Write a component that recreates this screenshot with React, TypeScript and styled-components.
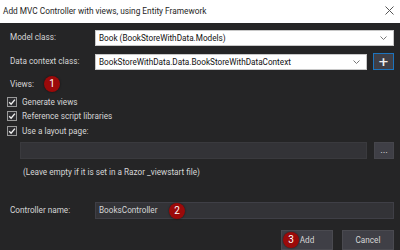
import React from "react";
import styled, { createGlobalStyle } from "styled-components";

const GlobalStyle = createGlobalStyle`
    html, body {
        margin: 0;
        padding: 0;
        background: #252526;
    }
    body {
        font-family: "Segoe UI", Roboto, Lato, sans-serif;
        font-size: 8.2px;
    }
`;

type BadgeProps = {
    $left?: number,
    $top?: number,
}

const App = () => {
    return (
        <>
            <GlobalStyle />
            <Window>
                <TitleBar>
                    <Title>Add MVC Controller with views, using Entity Framework</Title>
                    <CloseBtn aria-label="Close">
                        <svg width="9" height="9" viewBox="0 0 9 9">
                            <path d="M0.5 0.5 L8.5 8.5 M8.5 0.5 L0.5 8.5" stroke="#555" strokeWidth="1" />
                        </svg>
                    </CloseBtn>
                </TitleBar>

                <Body>
                    <FieldRow $top={7}>
                        <Label>Model class:</Label>
                        <Select>
                            <span>Book (BookStoreWithData.Models)</span>
                            <Chevron />
                        </Select>
                    </FieldRow>

                    <FieldRow $top={7}>
                        <Label>Data context class:</Label>
                        <Select>
                            <span>BookStoreWithData.Data.BookStoreWithDataContext</span>
                            <Chevron />
                        </Select>
                        <PlusBtn>+</PlusBtn>
                    </FieldRow>

                    <ViewsLabel>
                        Views:
                        <Badge $left={34} $top={-1}>1</Badge>
                    </ViewsLabel>

                    <CheckList>
                        <CheckRow><CheckBox /> Generate views</CheckRow>
                        <CheckRow><CheckBox /> Reference script libraries</CheckRow>
                        <CheckRow><CheckBox /> Use a layout page:</CheckRow>
                    </CheckList>

                    <PathRow>
                        <TextBox $dim />
                        <BrowseBtn>...</BrowseBtn>
                    </PathRow>

                    <Hint>(Leave empty if it is set in a Razor _viewstart file)</Hint>

                    <FieldRow $top={23}>
                        <Label>Controller name:</Label>
                        <TextBox>
                            BooksController
                            <Badge $left={73} $top={0}>2</Badge>
                        </TextBox>
                    </FieldRow>

                    <Footer>
                        <DialogBtn>
                            Add
                            <Badge $left={1} $top={1}>3</Badge>
                        </DialogBtn>
                        <DialogBtn>Cancel</DialogBtn>
                    </Footer>
                </Body>
            </Window>
        </>
    );
};

const Chevron = () => (
    <svg width="7" height="4" viewBox="0 0 7 4">
        <path d="M0.5 0.5 L3.5 3.5 L6.5 0.5" stroke="#777" strokeWidth="1" fill="none" />
    </svg>
);

const CheckBox = () => (
    <Box>
        <svg width="8" height="8" viewBox="0 0 8 8">
            <path d="M1.2 4.3 L3.1 6.2 L6.9 1.6" stroke="#f0f0f0" strokeWidth="1.4" fill="none" />
        </svg>
    </Box>
);

const Window = styled.div`
    width: 400px;
    height: 250px;
    display: flex;
    flex-direction: column;
    background: #252526;
    overflow: hidden;
`;

const TitleBar = styled.header`
    height: 23px;
    flex-shrink: 0;
    background: #ffffff;
    display: flex;
    align-items: center;
    justify-content: space-between;
    padding: 0 6px 0 3px;
    box-sizing: border-box;
`;

const Title = styled.span`
    color: #1e1e1e;
    font-size: 8.3px;
    margin-top: -2px;
`;

const CloseBtn = styled.button`
    border: none;
    background: none;
    padding: 0;
    display: flex;
    margin-top: -3px;
`;

const Body = styled.main`
    flex: 1;
    display: flex;
    flex-direction: column;
    padding: 0 6px 0 10px;
    color: #d6d6d6;
`;

const FieldRow = styled.div<{ $top: number }>`
    display: grid;
    grid-template-columns: 85px 1fr auto;
    align-items: center;
    margin-top: ${(p) => p.$top}px;
`;

const Label = styled.label`
    color: #d6d6d6;
    white-space: nowrap;
    margin-top: -2px;
`;

const Select = styled.div`
    grid-column: 2;
    height: 16px;
    background: #ffffff;
    border: 1px solid #c8c8c8;
    box-sizing: border-box;
    display: flex;
    align-items: center;
    justify-content: space-between;
    padding: 0 6px 0 3px;
    color: #111;
    white-space: nowrap;
`;

const PlusBtn = styled.button`
    width: 21px;
    height: 17px;
    margin-left: 6px;
    background: #3f3f46;
    border: 1px solid #1c74bd;
    color: #f0f0f0;
    font-family: "DejaVu Sans", sans-serif;
    font-size: 13px;
    font-weight: bold;
    line-height: 13px;
    padding: 0;
`;

const ViewsLabel = styled.div`
    position: relative;
    margin-top: 7px;
    height: 14px;
    line-height: 14px;
`;

const Badge = styled.span<BadgeProps>`
    position: absolute;
    left: ${(p) => p.$left ?? 0}px;
    top: ${(p) => p.$top ?? 0}px;
    width: 16px;
    height: 16px;
    border-radius: 50%;
    background: #9b0a0a;
    color: #ffffff;
    font-size: 10px;
    line-height: 16px;
    text-align: center;
    box-shadow: 0 0 2px rgba(0, 0, 0, 0.6);
`;

const CheckList = styled.div`
    display: flex;
    flex-direction: column;
    gap: 1.5px;
    margin: 4px 0 0 -3px;
`;

const CheckRow = styled.div`
    display: flex;
    align-items: center;
    gap: 5px;
    height: 13px;
    color: #d6d6d6;
`;

const Box = styled.span`
    width: 10px;
    height: 10px;
    box-sizing: border-box;
    border: 1px solid #9a9a9a;
    background: #2d2d30;
    display: flex;
    align-items: center;
    justify-content: center;
`;

const PathRow = styled.div`
    display: flex;
    gap: 7px;
    margin: 5px 0 0 10px;
`;

const TextBox = styled.div<{ $dim?: boolean }>`
    position: relative;
    grid-column: 2;
    flex: 1;
    height: 17px;
    box-sizing: border-box;
    background: #333337;
    border: 1px solid ${(p) => (p.$dim ? "#3a3a3e" : "#3f3f46")};
    color: #d6d6d6;
    padding: 0 3px;
    line-height: 15px;
    white-space: nowrap;
`;

const BrowseBtn = styled.button`
    width: 20px;
    height: 17px;
    background: #3f3f46;
    border: 1px solid #46464c;
    color: #d6d6d6;
    font-size: 9px;
    line-height: 9px;
    padding: 0;
`;

const Hint = styled.div`
    margin: 6px 0 0 13px;
    height: 14px;
    line-height: 14px;
    color: #d6d6d6;
    font-size: 8.2px;
    white-space: nowrap;
`;

const Footer = styled.footer`
    display: flex;
    justify-content: flex-end;
    gap: 9px;
    margin-top: 11px;
`;

const DialogBtn = styled.button`
    position: relative;
    width: 52px;
    height: 20px;
    background: #3f3f46;
    border: 1px solid #4a4a50;
    color: #d6d6d6;
    font-family: inherit;
    font-size: inherit;
    padding: 0;
`;

export default App;
